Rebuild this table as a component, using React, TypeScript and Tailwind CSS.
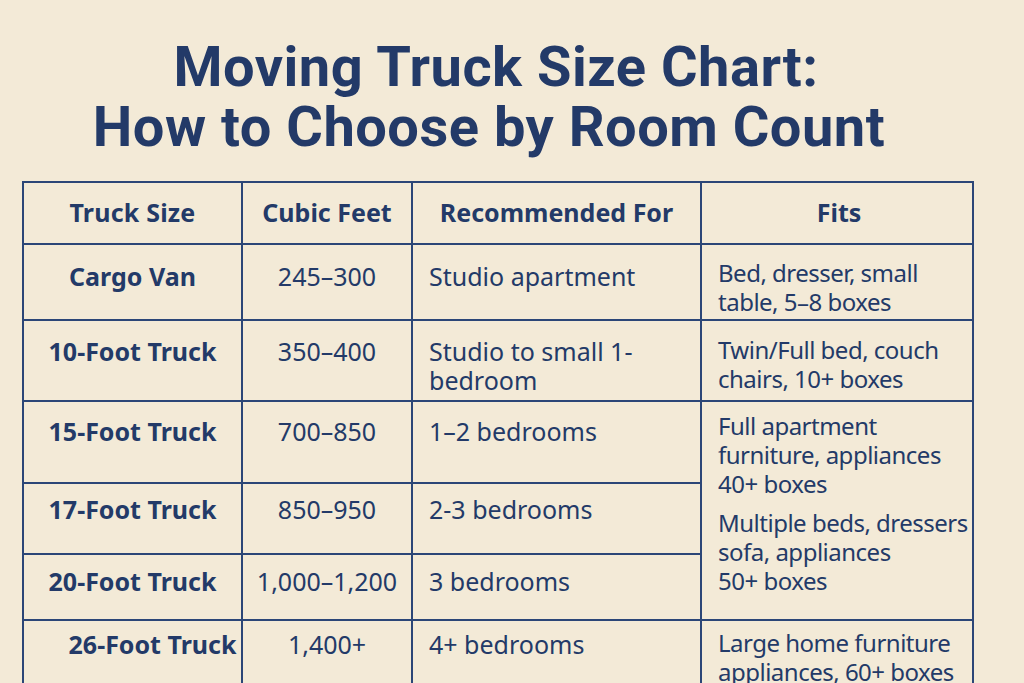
import React from "react";

const navy = "text-[#233a68]";

function Cell({ children, className = "" }: { children: React.ReactNode; className?: string }) {
  return <div className={`bg-[#f3ead7] ${className}`}>{children}</div>;
}

export default function App() {
  const body = "text-[25px] leading-[29px] whitespace-nowrap";
  const fits = "text-[24px] leading-[29px] tracking-[-0.5px] whitespace-nowrap pl-[16px]";
  return (
    <div
      className={`w-[1024px] h-[683px] overflow-hidden bg-[#f3ead7] ${navy}`}
      style={{ fontFamily: "'Noto Sans', 'Open Sans', sans-serif" }}
    >
      <div
        className="h-[181px] flex flex-col items-center pt-[37px] text-[56px] leading-[60px] font-bold tracking-[0.5px]"
        style={{ fontFamily: "Roboto, 'Liberation Sans', sans-serif" }}
      >
        <div className="pr-[32px]">Moving Truck Size Chart:</div>
        <div className="pr-[46px]">How to Choose by Room Count</div>
      </div>
      <div className="ml-[22px] w-[952px] border-2 border-[#2b4677] bg-[#2b4677] grid grid-cols-[217px_168px_287px_270px] grid-rows-[60px_74px_79px_80px_69px_64px_80px] gap-[2px]">
        {/* header */}
        <Cell className="flex justify-center items-center font-bold text-[25px] tracking-[0.2px]">Truck Size</Cell>
        <Cell className="flex justify-center items-center font-bold text-[25px]">Cubic Feet</Cell>
        <Cell className="flex justify-center items-center font-bold text-[25px]">Recommended For</Cell>
        <Cell className="flex justify-center items-center font-bold text-[25px] pl-[4px]">Fits</Cell>

        {/* row 1 */}
        <Cell className={`${body} font-bold text-center pt-[17px]`}>Cargo Van</Cell>
        <Cell className={`${body} text-center pt-[17px]`}>245–300</Cell>
        <Cell className={`${body} pl-[16px] pt-[17px]`}>Studio apartment</Cell>
        <Cell className={`${fits} pt-[13px]`}>
          Bed, dresser, small
          <br />
          table, 5–8 boxes
        </Cell>

        {/* row 2 */}
        <Cell className={`${body} font-bold text-center pt-[16px]`}>10-Foot Truck</Cell>
        <Cell className={`${body} text-center pt-[16px]`}>350–400</Cell>
        <Cell className={`${body} pl-[16px] pt-[16px]`}>
          Studio to small 1-
          <br />
          bedroom
        </Cell>
        <Cell className={`${fits} pt-[14px]`}>
          Twin/Full bed, couch
          <br />
          chairs, 10+ boxes
        </Cell>

        {/* row 3 */}
        <Cell className={`${body} font-bold text-center pt-[15px]`}>15-Foot Truck</Cell>
        <Cell className={`${body} text-center pt-[15px]`}>700–850</Cell>
        <Cell className={`${body} pl-[16px] pt-[15px]`}>1–2 bedrooms</Cell>
        <Cell className={`${fits} pt-[9px] row-span-3`}>
          Full apartment
          <br />
          furniture, appliances
          <br />
          40+ boxes
          <div className="mt-[10px]">
            Multiple beds, dressers
            <br />
            sofa, appliances
            <br />
            50+ boxes
          </div>
        </Cell>

        {/* row 4 */}
        <Cell className={`${body} font-bold text-center pt-[11px]`}>17-Foot Truck</Cell>
        <Cell className={`${body} text-center pt-[11px]`}>850–950</Cell>
        <Cell className={`${body} pl-[16px] pt-[11px]`}>2-3 bedrooms</Cell>

        {/* row 5 */}
        <Cell className={`${body} font-bold text-center pt-[12px]`}>20-Foot Truck</Cell>
        <Cell className={`${body} text-center pt-[12px]`}>1,000–1,200</Cell>
        <Cell className={`${body} pl-[16px] pt-[12px]`}>3 bedrooms</Cell>

        {/* row 6 */}
        <Cell className={`${body} font-bold text-center pt-[9px] pl-[40px]`}>26-Foot Truck</Cell>
        <Cell className={`${body} text-center pt-[9px]`}>1,400+</Cell>
        <Cell className={`${body} pl-[16px] pt-[9px]`}>4+ bedrooms</Cell>
        <Cell className={`${fits} pt-[7px]`}>
          Large home furniture
          <br />
          appliances, 60+ boxes
        </Cell>
      </div>
    </div>
  );
}
